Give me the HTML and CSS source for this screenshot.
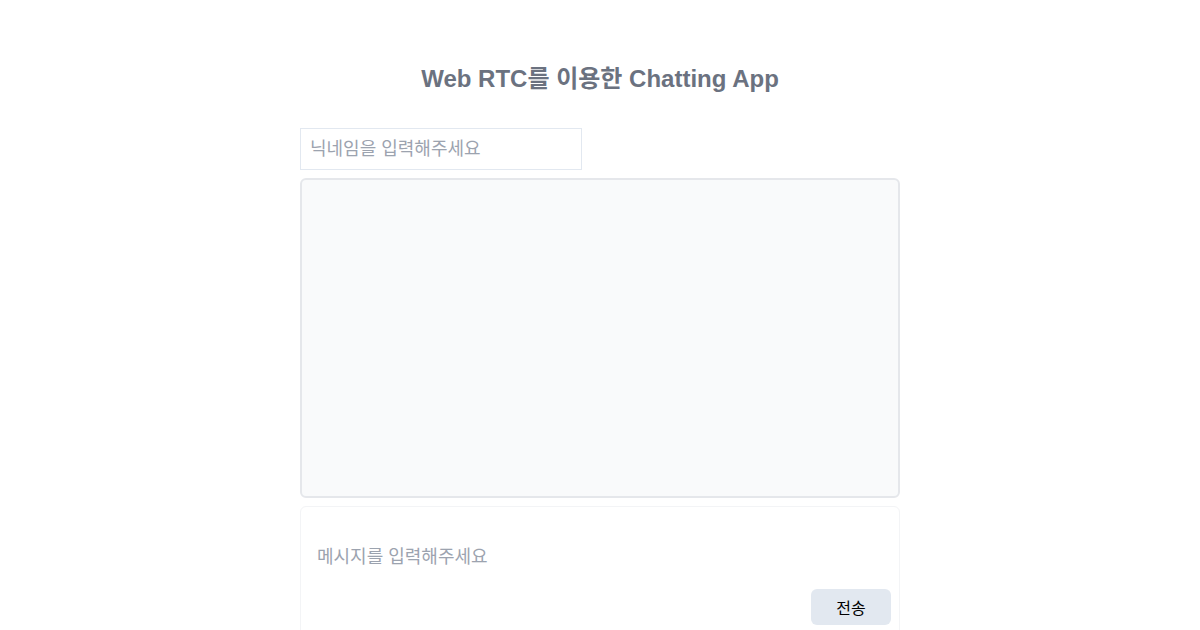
FILE: index.html
```html
<!DOCTYPE html>
<html lang="ko">
<head>
<meta charset="utf-8">
<title>Web RTC Chatting App</title>
<link rel="stylesheet" href="styles.css">
</head>
<body>
<main class="app">
  <h1 class="title">Web RTC를 이용한 Chatting App</h1>
  <input class="nickname" type="text" placeholder="닉네임을 입력해주세요">
  <div class="chat-log"></div>
  <div class="composer">
    <textarea class="message" placeholder="메시지를 입력해주세요"></textarea>
    <div class="actions">
      <button class="send" type="button">전송</button>
    </div>
  </div>
</main>
</body>
</html>
```

FILE: styles.css
```css
* { box-sizing: border-box; }
html, body { margin: 0; padding: 0; background: #ffffff; }
body {
  font-family: "Liberation Sans", Arial, "Noto Sans CJK KR", sans-serif;
  overflow: hidden;
}
.app {
  width: 600px;
  margin: 0 auto;
  padding-top: 63px;
  display: flex;
  flex-direction: column;
}
.title {
  margin: 0 0 33px;
  font-size: 24px;
  line-height: 32px;
  font-weight: 700;
  color: #6b7280;
  text-align: center;
}
.nickname {
  width: 282px;
  height: 42px;
  border: 1px solid #e2e8f0;
  border-radius: 0;
  padding: 0 9px;
  font-family: inherit;
  font-size: 18px;
  color: #374151;
  outline: none;
}
.nickname::placeholder { color: #9ca3af; }
.chat-log {
  margin-top: 8px;
  height: 320px;
  border: 2px solid #e5e7eb;
  border-radius: 6px;
  background: #f9fafb;
}
.composer {
  margin-top: 8px;
  height: 140px;
  border: 1px solid #f3f4f6;
  border-radius: 6px;
  background: #ffffff;
  padding: 0 8px 0 16px;
  display: flex;
  flex-direction: column;
}
.message {
  height: 82px;
  border: none;
  resize: none;
  padding: 38px 0 0;
  font-family: inherit;
  font-size: 18px;
  line-height: 24px;
  color: #374151;
  outline: none;
  background: transparent;
}
.message::placeholder { color: #9ca3af; }
.actions {
  display: flex;
  justify-content: flex-end;
}
.send {
  width: 80px;
  height: 36px;
  border: none;
  border-radius: 6px;
  background: #e2e8f0;
  color: #000000;
  font-family: inherit;
  font-size: 16px;
  cursor: pointer;
}
```
